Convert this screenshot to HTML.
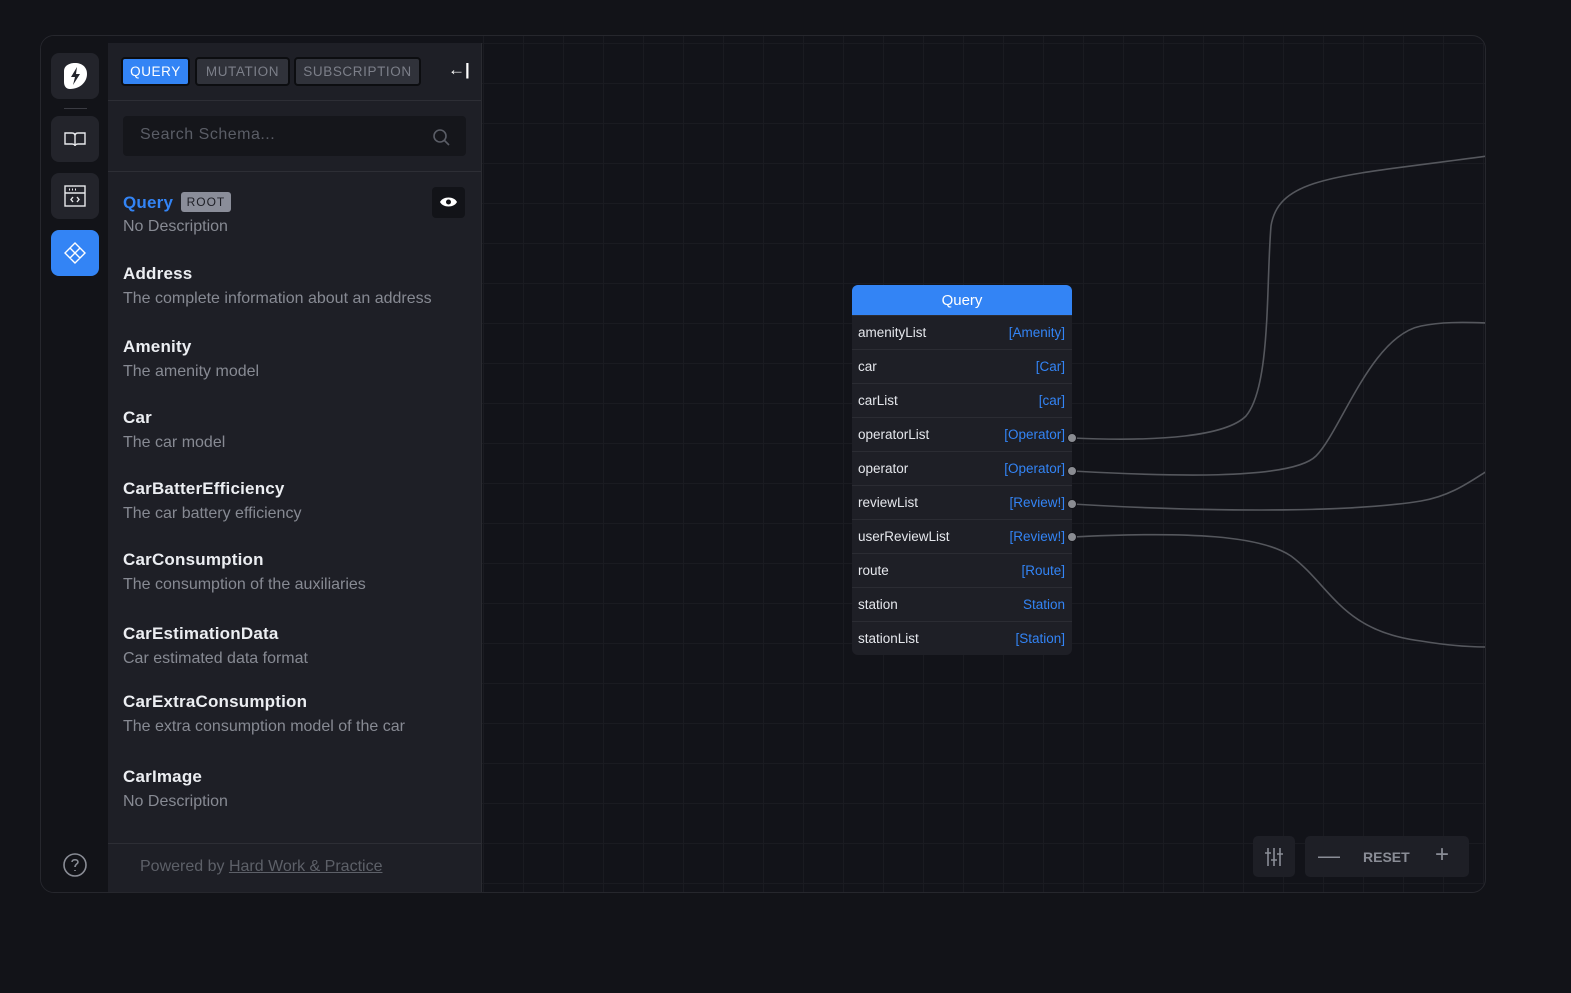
<!DOCTYPE html><html><head><style>
*{box-sizing:border-box;margin:0;padding:0}
body{width:1571px;height:993px;background:#121318;font-family:"Liberation Sans",sans-serif;position:relative;overflow:hidden}
.frame{position:absolute;left:40px;top:35px;width:1446px;height:858px;border:1px solid #26272d;border-radius:14px;overflow:hidden;background:#121319}
.rail{position:absolute;left:0;top:0;width:67px;height:100%;background:#121318}
.rb{position:absolute;left:10px;width:48px;height:46px;border-radius:8px;background:#23242b;display:flex;align-items:center;justify-content:center}
.panel{position:absolute;left:67px;top:7px;width:374px;height:850px;background:#1e1f26;border-right:1px solid #2a2b31}
.tabs{height:58px;border-bottom:1px solid #2d2e35;position:relative}
.tab{position:absolute;top:14px;height:29px;border-radius:4px;font-size:13.5px;letter-spacing:.6px;display:flex;align-items:center;justify-content:center;border:2px solid #0c0d10;background:#30323a;color:#7c7f89}
.search{position:absolute;left:15px;top:73px;width:343px;height:40px;background:#15161b;border-radius:4px;color:#5a5d66;font-size:16px;padding:10px 17px;letter-spacing:.5px}
.list{position:absolute;top:128px;left:0;width:100%;border-top:1px solid #2d2e35}
.it{position:absolute;left:15px}
.it b{display:block;color:#eceef2;font-size:17px;font-weight:bold;letter-spacing:.2px}
.it span{display:block;color:#878a93;font-size:16px;margin-top:6px}
.foot{position:absolute;left:0;top:800px;width:100%;height:50px;border-top:1px solid #2d2e35;color:#5d6068;font-size:16px;padding:14px 32px}
.node{position:absolute;left:811px;top:249px;width:220px;border-radius:6px;background:#1e1f26;overflow:hidden}
.nh{height:30px;background:#3384f5;color:#fff;text-align:center;font-size:15px;line-height:32px}
.row{height:34px;border-top:1px solid #2b2c33;display:flex;justify-content:space-between;align-items:center;padding:0 7px 0 6px;font-size:13.5px;color:#e5e7ec}
.row i{font-style:normal;color:#3384f5}
.ctl{position:absolute;top:800px;height:41px;background:#1e1f26;border-radius:5px;color:#8a8d96}
</style></head><body>
<div class="frame">
<svg style="position:absolute;left:0;top:0" width="1446" height="858">
<defs><pattern id="g" x="2" y="7" width="40" height="40" patternUnits="userSpaceOnUse"><path d="M0 0H40M0 0V40" stroke="#1a1b21" stroke-width="2" fill="none"/></pattern></defs>
<rect x="440" y="0" width="1006" height="858" fill="url(#g)"/>
<g stroke="#55575d" stroke-width="1.6" fill="none">
<path d="M1031 402C1120 406 1185 400 1205 380C1230 350 1225 250 1230 190C1238 140 1300 140 1446 120"/>
<path d="M1031 435C1120 440 1250 445 1275 420C1300 395 1330 300 1380 290C1400 286 1420 286 1446 287"/>
<path d="M1031 468C1150 475 1300 478 1380 465C1410 460 1430 445 1446 435"/>
<path d="M1031 501C1150 495 1220 500 1250 520C1290 550 1300 595 1380 605C1410 610 1430 611 1446 611"/>
</g>
</svg>
<div class="rail">
<div class="rb" style="top:17px"><svg width="26" height="28" viewBox="0 0 26 28"><path d="M13 1C20 1 25 5 25 12C25 20 18 27 8 27C4 27 2 24 2 20L2 9C2 4 7 1 13 1Z" fill="#fff"/><path d="M15 5L9 15H13L11 23L18 12H14Z" fill="#23242b"/></svg></div>
<div style="position:absolute;left:23px;top:72px;width:23px;height:1px;background:#3a3b42"></div>
<div class="rb" style="top:80px"><svg width="22" height="18" viewBox="0 0 22 18" fill="none" stroke="#e8e9ec" stroke-width="1.4"><path d="M1 3H8C10 3 11 4 11 6V16C11 15 10 14 8 14H1ZM21 3H14C12 3 11 4 11 6V16C11 15 12 14 14 14H21Z"/></svg></div>
<div class="rb" style="top:137px"><svg width="22" height="22" viewBox="0 0 22 22" fill="none" stroke="#e8e9ec" stroke-width="1.4"><rect x="1" y="1" width="20" height="20"/><path d="M1 8H21M9 12L7 14.5L9 17M13 12L15 14.5L13 17"/><path d="M5 4.5H6M8 4.5H9M11 4.5H12" stroke-width="2"/></svg></div>
<div class="rb" style="top:194px;background:#3384f5"><svg width="24" height="24" viewBox="0 0 24 24" fill="none" stroke="#fff" stroke-width="1.4"><path d="M12 2L17 7L12 12L7 7ZM7 7L2 12L7 17L12 12M17 7L22 12L17 17L12 12M7 17L12 22L17 17"/></svg></div>
<svg style="position:absolute;left:22px;top:817px" width="24" height="24" viewBox="0 0 24 24" fill="none" stroke="#8a8d96" stroke-width="1.6"><circle cx="12" cy="12" r="11"/><path d="M9 9C9 6 15 6 15 9C15 11 12 11 12 14M12 17V18"/></svg>
</div>
<div class="panel">
<div class="tabs">
<div class="tab" style="left:13px;width:69px;background:#3384f5;color:#fff">QUERY</div>
<div class="tab" style="left:87px;width:95px">MUTATION</div>
<div class="tab" style="left:186px;width:127px">SUBSCRIPTION</div>
<div style="position:absolute;left:340px;top:17px;color:#fff;font-size:17px;font-weight:bold">&#8592;|</div>
</div>
<div class="search">Search Schema...<svg style="position:absolute;right:16px;top:12px" width="18" height="18" viewBox="0 0 18 18" fill="none" stroke="#5a5d66" stroke-width="1.6"><circle cx="8" cy="8" r="6"/><path d="M12.5 12.5L17 17"/></svg></div>
<div class="list">
<div class="it" style="top:20px"><b style="color:#3384f5;display:inline-block">Query</b> <span style="display:inline-block;background:#8a8d99;color:#1e1f26;font-size:12px;padding:3px 6px;border-radius:3px;margin:0 0 0 3px;letter-spacing:1px;vertical-align:2px">ROOT</span><span style="margin-top:5px">No Description</span></div>
<div style="position:absolute;left:324px;top:15px;width:33px;height:31px;background:#121318;border-radius:4px"><svg style="margin:8px 7px" width="19" height="14" viewBox="0 0 19 14"><path d="M1 7C4 1 15 1 18 7C15 13 4 13 1 7Z" fill="#fff"/><circle cx="9.5" cy="7" r="2.5" fill="#121318"/></svg></div>
<div class="it" style="top:92px"><b>Address</b><span>The complete information about an address</span></div>
<div class="it" style="top:165px"><b>Amenity</b><span>The amenity model</span></div>
<div class="it" style="top:236px"><b>Car</b><span>The car model</span></div>
<div class="it" style="top:307px"><b>CarBatterEfficiency</b><span>The car battery efficiency</span></div>
<div class="it" style="top:378px"><b>CarConsumption</b><span>The consumption of the auxiliaries</span></div>
<div class="it" style="top:452px"><b>CarEstimationData</b><span>Car estimated data format</span></div>
<div class="it" style="top:520px"><b>CarExtraConsumption</b><span>The extra consumption model of the car</span></div>
<div class="it" style="top:595px"><b>CarImage</b><span>No Description</span></div>
</div>
<div class="foot">Powered by <u>Hard Work &amp; Practice</u></div>
</div>
<div class="node"><div class="nh">Query</div>
<div class="row">amenityList<i>[Amenity]</i></div>
<div class="row">car<i>[Car]</i></div>
<div class="row">carList<i>[car]</i></div>
<div class="row">operatorList<i>[Operator]</i></div>
<div class="row">operator<i>[Operator]</i></div>
<div class="row">reviewList<i>[Review!]</i></div>
<div class="row">userReviewList<i>[Review!]</i></div>
<div class="row">route<i>[Route]</i></div>
<div class="row">station<i>Station</i></div>
<div class="row">stationList<i>[Station]</i></div>
</div>
<svg style="position:absolute;left:1020px;top:390px" width="24" height="124"><g fill="#8a8c92" stroke="#121319" stroke-width="1"><circle cx="11" cy="12" r="4.5"/><circle cx="11" cy="45" r="4.5"/><circle cx="11" cy="78" r="4.5"/><circle cx="11" cy="111" r="4.5"/></g></svg>
<div class="ctl" style="left:1212px;width:42px"><svg style="margin:12px 12px" width="18" height="18" viewBox="0 0 18 18" stroke="#8a8d96" stroke-width="1.6"><path d="M3 0V18M9 0V18M15 0V18M0 5H6M6 12H12M12 6H18"/></svg></div>
<div class="ctl" style="left:1264px;width:164px"><span style="position:absolute;left:13px;top:7px;font-size:22px">&#8212;</span><span style="position:absolute;left:58px;top:13px;font-size:14px;font-weight:bold">RESET</span><span style="position:absolute;left:130px;top:5px;font-size:24px">+</span></div>
</div>
</body></html>
